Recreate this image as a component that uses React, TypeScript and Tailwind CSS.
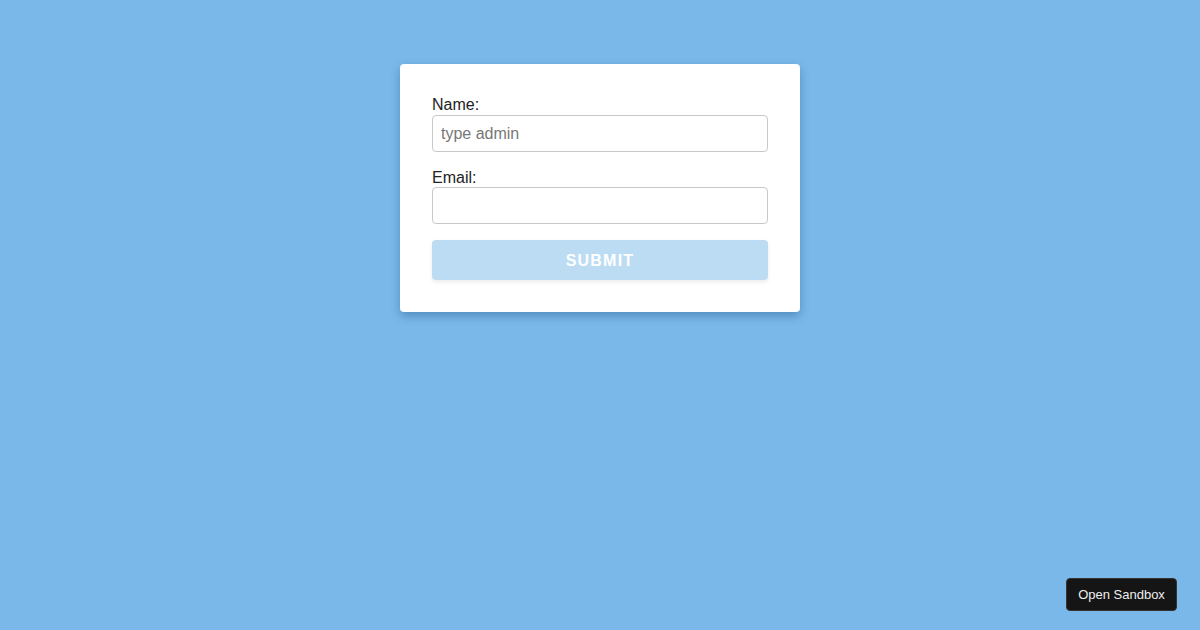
import React from "react";

export default function App() {
  return (
    <div
      className="w-[1200px] h-[630px] bg-[#7ab8e9] relative overflow-hidden"
      style={{ fontFamily: '"Liberation Sans", Arial, sans-serif' }}
    >
      <div className="flex justify-center pt-[64px]">
        <div className="w-[400px] bg-white rounded-[4px] px-[32px] pt-[32px] pb-[32px] shadow-[0_4px_10px_rgba(40,90,140,0.45)] flex flex-col">
          <label className="text-[16px] leading-[18px] h-[19px] text-[#222]">Name:</label>
          <input
            placeholder="type admin"
            className="h-[37px] w-full border border-[#c8c8c8] rounded-[4px] px-[8px] text-[16px] text-[#222] placeholder:text-[#777] outline-none"
          />
          <label className="mt-[18px] text-[16px] leading-[15px] h-[17px] text-[#222]">Email:</label>
          <input className="h-[37px] w-full border border-[#c8c8c8] rounded-[4px] px-[8px] text-[16px] outline-none" />
          <button className="mt-[16px] h-[40px] w-full rounded-[4px] bg-[#bcdcf4] text-white font-bold text-[16px] leading-[20px] pt-[2px] tracking-[1.2px] shadow-[0_2px_4px_rgba(0,0,0,0.08)]">
            SUBMIT
          </button>
        </div>
      </div>
      <div className="absolute left-[1066px] top-[578px] w-[111px] h-[33px] bg-[#151515] border border-[#333] rounded-[4px] flex items-center justify-center text-[13px] text-[#eee]">
        Open Sandbox
      </div>
    </div>
  );
}
